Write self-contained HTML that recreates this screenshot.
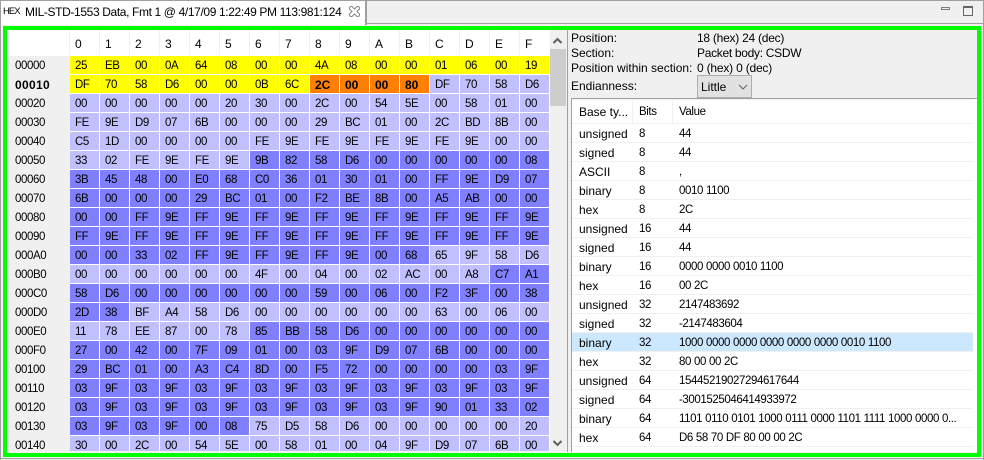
<!DOCTYPE html>
<html><head><meta charset="utf-8">
<style>
html,body{margin:0;padding:0;width:984px;height:460px;overflow:hidden;background:#f0f0f0}
body{position:relative;font-family:"Liberation Sans",sans-serif;font-size:12px;color:#000}
.a{position:absolute}
.r{position:absolute;left:8px;height:18px;line-height:20px;width:542px;display:flex;white-space:nowrap;font-size:11.5px;letter-spacing:-.4px}
.r b.ad{font-weight:700;font-size:12px;letter-spacing:.33px}
.ad{display:block;width:55px;padding-left:7px;margin-right:0;font-weight:400;flex:none}
.r i{display:block;font-style:normal;width:24px;padding-left:5px;margin-right:1px;flex:none;height:18px}
.y{background:#ff0}.r i.o{background:#ff8000;font-weight:700;font-size:12px;letter-spacing:0}.l{background:#c0c0ff}.d{background:#8080ff}
.h{position:absolute;top:30px;height:25px;line-height:28px;width:29px;padding-left:5px;box-sizing:border-box;background:#fff;border-right:0}
.s{position:absolute;top:30px;width:1px;height:25px;background:#f0f0f0}
.t{position:absolute;left:572px;width:401px;height:18px;line-height:20px;display:flex;background:#fff;white-space:nowrap}
.t span{display:block;flex:none;box-sizing:border-box}
.t span:nth-child(1){width:60px;padding-left:7px;margin-right:1px}
.t span:nth-child(2){width:39px;padding-left:6px;margin-right:1px;font-size:11.5px;letter-spacing:-.4px}
.t span:nth-child(3){width:300px;padding-left:6px;font-size:11.5px;letter-spacing:-.4px;word-spacing:.2px}
</style></head><body>
<div class="a" style="left:0;top:0;width:984px;height:1px;background:#a0a0a0"></div>
<div class="a" style="left:0;top:1px;width:367px;height:24px;background:#fff;border-right:2px solid #a0a0a0;box-sizing:border-box"></div>
<div class="a" style="left:367px;top:23px;width:617px;height:1px;background:#a0a0a0"></div>
<div class="a" style="left:0;top:0;width:1px;height:460px;background:#a0a0a0"></div>
<div class="a" style="left:983px;top:0;width:1px;height:460px;background:#a0a0a0"></div>
<div class="a" style="left:0;top:458px;width:984px;height:1px;background:#a0a0a0"></div>
<div class="a" style="left:3px;top:6px;font-size:9.5px;letter-spacing:-1px;line-height:11px">HEX</div>
<div class="a" style="left:25px;top:4px;line-height:17px;font-size:12px;letter-spacing:-.37px;white-space:nowrap">MIL-STD-1553 Data, Fmt 1 @ 4/17/09 1:22:49 PM 113:981:124</div>
<svg class="a" style="left:349px;top:6px" width="11" height="11" viewBox="0 0 11 11"><path d="M1.5 .5L3 .5L5.5 3L8 .5L9.5 .5L10.5 1.5L10.5 3L8 5.5L10.5 8L10.5 9.5L9.5 10.5L8 10.5L5.5 8L3 10.5L1.5 10.5L.5 9.5L.5 8L3 5.5L.5 3L.5 1.5Z" fill="none" stroke="#888" stroke-width="1"/></svg>
<div class="a" style="left:941px;top:7px;width:9px;height:3px;border:1px solid #7a7a7a;box-sizing:border-box"></div>
<div class="a" style="left:963px;top:6px;width:10px;height:10px;border:1px solid #666;border-top-width:2px;box-sizing:border-box"></div>

<div class="a" style="left:3px;top:26px;width:978px;height:431px;border:4px solid #00ff00;box-sizing:border-box;background:#f0f0f0"></div>
<div class="a" style="left:7px;top:30px;width:543px;height:421px;background:#fff"></div>
<div class="a" style="left:8px;top:56px;width:62px;height:395px;background:#f0f0f0"></div>

<div class="h" style="left:70px">0</div><div class="h" style="left:100px">1</div><div class="h" style="left:130px">2</div><div class="h" style="left:160px">3</div><div class="h" style="left:190px">4</div><div class="h" style="left:220px">5</div><div class="h" style="left:250px">6</div><div class="h" style="left:280px">7</div><div class="h" style="left:310px">8</div><div class="h" style="left:340px">9</div><div class="h" style="left:370px">A</div><div class="h" style="left:400px">B</div><div class="h" style="left:430px">C</div><div class="h" style="left:460px">D</div><div class="h" style="left:490px">E</div><div class="h" style="left:520px">F</div>
<div class="s" style="left:69px"></div><div class="s" style="left:99px"></div><div class="s" style="left:129px"></div><div class="s" style="left:159px"></div><div class="s" style="left:189px"></div><div class="s" style="left:219px"></div><div class="s" style="left:249px"></div><div class="s" style="left:279px"></div><div class="s" style="left:309px"></div><div class="s" style="left:339px"></div><div class="s" style="left:369px"></div><div class="s" style="left:399px"></div><div class="s" style="left:429px"></div><div class="s" style="left:459px"></div><div class="s" style="left:489px"></div><div class="s" style="left:519px"></div>

<div class="r" style="top:56px"><span class="ad">00000</span><i class="y">25</i><i class="y">EB</i><i class="y">00</i><i class="y">0A</i><i class="y">64</i><i class="y">08</i><i class="y">00</i><i class="y">00</i><i class="y">4A</i><i class="y">08</i><i class="y">00</i><i class="y">00</i><i class="y">01</i><i class="y">06</i><i class="y">00</i><i class="y">19</i></div>
<div class="r" style="top:75px"><b class="ad">00010</b><i class="y">DF</i><i class="y">70</i><i class="y">58</i><i class="y">D6</i><i class="y">00</i><i class="y">00</i><i class="y">0B</i><i class="y">6C</i><i class="o">2C</i><i class="o">00</i><i class="o">00</i><i class="o">80</i><i class="l">DF</i><i class="l">70</i><i class="l">58</i><i class="l">D6</i></div>
<div class="r" style="top:94px"><span class="ad">00020</span><i class="l">00</i><i class="l">00</i><i class="l">00</i><i class="l">00</i><i class="l">00</i><i class="l">20</i><i class="l">30</i><i class="l">00</i><i class="l">2C</i><i class="l">00</i><i class="l">54</i><i class="l">5E</i><i class="l">00</i><i class="l">58</i><i class="l">01</i><i class="l">00</i></div>
<div class="r" style="top:113px"><span class="ad">00030</span><i class="l">FE</i><i class="l">9E</i><i class="l">D9</i><i class="l">07</i><i class="l">6B</i><i class="l">00</i><i class="l">00</i><i class="l">00</i><i class="l">29</i><i class="l">BC</i><i class="l">01</i><i class="l">00</i><i class="l">2C</i><i class="l">BD</i><i class="l">8B</i><i class="l">00</i></div>
<div class="r" style="top:132px"><span class="ad">00040</span><i class="l">C5</i><i class="l">1D</i><i class="l">00</i><i class="l">00</i><i class="l">00</i><i class="l">00</i><i class="l">FE</i><i class="l">9E</i><i class="l">FE</i><i class="l">9E</i><i class="l">FE</i><i class="l">9E</i><i class="l">FE</i><i class="l">9E</i><i class="l">00</i><i class="l">00</i></div>
<div class="r" style="top:151px"><span class="ad">00050</span><i class="l">33</i><i class="l">02</i><i class="l">FE</i><i class="l">9E</i><i class="l">FE</i><i class="l">9E</i><i class="d">9B</i><i class="d">82</i><i class="d">58</i><i class="d">D6</i><i class="d">00</i><i class="d">00</i><i class="d">00</i><i class="d">00</i><i class="d">00</i><i class="d">08</i></div>
<div class="r" style="top:170px"><span class="ad">00060</span><i class="d">3B</i><i class="d">45</i><i class="d">48</i><i class="d">00</i><i class="d">E0</i><i class="d">68</i><i class="d">C0</i><i class="d">36</i><i class="d">01</i><i class="d">30</i><i class="d">01</i><i class="d">00</i><i class="d">FF</i><i class="d">9E</i><i class="d">D9</i><i class="d">07</i></div>
<div class="r" style="top:189px"><span class="ad">00070</span><i class="d">6B</i><i class="d">00</i><i class="d">00</i><i class="d">00</i><i class="d">29</i><i class="d">BC</i><i class="d">01</i><i class="d">00</i><i class="d">F2</i><i class="d">BE</i><i class="d">8B</i><i class="d">00</i><i class="d">A5</i><i class="d">AB</i><i class="d">00</i><i class="d">00</i></div>
<div class="r" style="top:208px"><span class="ad">00080</span><i class="d">00</i><i class="d">00</i><i class="d">FF</i><i class="d">9E</i><i class="d">FF</i><i class="d">9E</i><i class="d">FF</i><i class="d">9E</i><i class="d">FF</i><i class="d">9E</i><i class="d">FF</i><i class="d">9E</i><i class="d">FF</i><i class="d">9E</i><i class="d">FF</i><i class="d">9E</i></div>
<div class="r" style="top:227px"><span class="ad">00090</span><i class="d">FF</i><i class="d">9E</i><i class="d">FF</i><i class="d">9E</i><i class="d">FF</i><i class="d">9E</i><i class="d">FF</i><i class="d">9E</i><i class="d">FF</i><i class="d">9E</i><i class="d">FF</i><i class="d">9E</i><i class="d">FF</i><i class="d">9E</i><i class="d">FF</i><i class="d">9E</i></div>
<div class="r" style="top:246px"><span class="ad">000A0</span><i class="d">00</i><i class="d">00</i><i class="d">33</i><i class="d">02</i><i class="d">FF</i><i class="d">9E</i><i class="d">FF</i><i class="d">9E</i><i class="d">FF</i><i class="d">9E</i><i class="d">00</i><i class="d">68</i><i class="l">65</i><i class="l">9F</i><i class="l">58</i><i class="l">D6</i></div>
<div class="r" style="top:265px"><span class="ad">000B0</span><i class="l">00</i><i class="l">00</i><i class="l">00</i><i class="l">00</i><i class="l">00</i><i class="l">00</i><i class="l">4F</i><i class="l">00</i><i class="l">04</i><i class="l">00</i><i class="l">02</i><i class="l">AC</i><i class="l">00</i><i class="l">A8</i><i class="d">C7</i><i class="d">A1</i></div>
<div class="r" style="top:284px"><span class="ad">000C0</span><i class="d">58</i><i class="d">D6</i><i class="d">00</i><i class="d">00</i><i class="d">00</i><i class="d">00</i><i class="d">00</i><i class="d">00</i><i class="d">59</i><i class="d">00</i><i class="d">06</i><i class="d">00</i><i class="d">F2</i><i class="d">3F</i><i class="d">00</i><i class="d">38</i></div>
<div class="r" style="top:303px"><span class="ad">000D0</span><i class="d">2D</i><i class="d">38</i><i class="l">BF</i><i class="l">A4</i><i class="l">58</i><i class="l">D6</i><i class="l">00</i><i class="l">00</i><i class="l">00</i><i class="l">00</i><i class="l">00</i><i class="l">00</i><i class="l">63</i><i class="l">00</i><i class="l">06</i><i class="l">00</i></div>
<div class="r" style="top:322px"><span class="ad">000E0</span><i class="l">11</i><i class="l">78</i><i class="l">EE</i><i class="l">87</i><i class="l">00</i><i class="l">78</i><i class="d">85</i><i class="d">BB</i><i class="d">58</i><i class="d">D6</i><i class="d">00</i><i class="d">00</i><i class="d">00</i><i class="d">00</i><i class="d">00</i><i class="d">00</i></div>
<div class="r" style="top:341px"><span class="ad">000F0</span><i class="d">27</i><i class="d">00</i><i class="d">42</i><i class="d">00</i><i class="d">7F</i><i class="d">09</i><i class="d">01</i><i class="d">00</i><i class="d">03</i><i class="d">9F</i><i class="d">D9</i><i class="d">07</i><i class="d">6B</i><i class="d">00</i><i class="d">00</i><i class="d">00</i></div>
<div class="r" style="top:360px"><span class="ad">00100</span><i class="d">29</i><i class="d">BC</i><i class="d">01</i><i class="d">00</i><i class="d">A3</i><i class="d">C4</i><i class="d">8D</i><i class="d">00</i><i class="d">F5</i><i class="d">72</i><i class="d">00</i><i class="d">00</i><i class="d">00</i><i class="d">00</i><i class="d">03</i><i class="d">9F</i></div>
<div class="r" style="top:379px"><span class="ad">00110</span><i class="d">03</i><i class="d">9F</i><i class="d">03</i><i class="d">9F</i><i class="d">03</i><i class="d">9F</i><i class="d">03</i><i class="d">9F</i><i class="d">03</i><i class="d">9F</i><i class="d">03</i><i class="d">9F</i><i class="d">03</i><i class="d">9F</i><i class="d">03</i><i class="d">9F</i></div>
<div class="r" style="top:398px"><span class="ad">00120</span><i class="d">03</i><i class="d">9F</i><i class="d">03</i><i class="d">9F</i><i class="d">03</i><i class="d">9F</i><i class="d">03</i><i class="d">9F</i><i class="d">03</i><i class="d">9F</i><i class="d">03</i><i class="d">9F</i><i class="d">90</i><i class="d">01</i><i class="d">33</i><i class="d">02</i></div>
<div class="r" style="top:417px"><span class="ad">00130</span><i class="d">03</i><i class="d">9F</i><i class="d">03</i><i class="d">9F</i><i class="d">00</i><i class="d">08</i><i class="l">75</i><i class="l">D5</i><i class="l">58</i><i class="l">D6</i><i class="l">00</i><i class="l">00</i><i class="l">00</i><i class="l">00</i><i class="l">00</i><i class="l">20</i></div>
<div class="r" style="top:436px;height:15px;overflow:hidden"><span class="ad">00140</span><i class="l">30</i><i class="l">00</i><i class="l">2C</i><i class="l">00</i><i class="l">54</i><i class="l">5E</i><i class="l">00</i><i class="l">58</i><i class="l">01</i><i class="l">00</i><i class="l">04</i><i class="l">9F</i><i class="l">D9</i><i class="l">07</i><i class="l">6B</i><i class="l">00</i></div>

<div class="a" style="left:550px;top:30px;width:17px;height:421px;background:#f0f0f0"></div>
<div class="a" style="left:550px;top:49px;width:16px;height:57px;background:#cdcdcd"></div>
<svg class="a" style="left:552px;top:37px" width="11" height="8" viewBox="0 0 11 8"><path d="M1.5 6L5.5 2L9.5 6" fill="none" stroke="#606060" stroke-width="2"/></svg>
<svg class="a" style="left:552px;top:439px" width="11" height="8" viewBox="0 0 11 8"><path d="M1.5 2L5.5 6L9.5 2" fill="none" stroke="#606060" stroke-width="2"/></svg>
<div class="a" style="left:567px;top:30px;width:1px;height:422px;background:#a0a0a0"></div>

<div class="a" style="left:571px;top:31px;line-height:15px;white-space:nowrap">Position:</div>
<div class="a" style="left:571px;top:46px;line-height:15px;white-space:nowrap">Section:</div>
<div class="a" style="left:571px;top:61px;line-height:15px;white-space:nowrap">Position within section:</div>
<div class="a" style="left:571px;top:79px;line-height:15px;white-space:nowrap">Endianness:</div>
<div class="a" style="left:697px;top:31px;line-height:15px;white-space:nowrap;letter-spacing:-.25px">18 (hex) 24 (dec)</div>
<div class="a" style="left:697px;top:46px;line-height:15px;white-space:nowrap;letter-spacing:-.3px">Packet body: CSDW</div>
<div class="a" style="left:697px;top:61px;line-height:15px;white-space:nowrap;letter-spacing:-.2px">0 (hex) 0 (dec)</div>
<div class="a" style="left:697px;top:75px;width:55px;height:23px;background:#e1e1e1;border:1px solid #adadad;box-sizing:border-box;line-height:23px;padding-left:3px">Little</div>
<svg class="a" style="left:738px;top:84px" width="10" height="6" viewBox="0 0 10 6"><path d="M1 1L5 5L9 1" fill="none" stroke="#606060" stroke-width="1"/></svg>

<div class="a" style="left:571px;top:98px;width:406px;height:354px;background:#fff;border-top:1px solid #a0a0a0;border-left:1px solid #a0a0a0;box-sizing:border-box"></div>
<div class="a" style="left:572px;top:99px;width:401px;height:352px;background:#f0f0f0"></div>
<div class="a" style="left:572px;top:100px;width:401px;height:23px;background:#fff"></div>
<div class="t" style="top:103px;height:19px;line-height:18px"><span>Base ty...</span><span>Bits</span><span>Value</span></div>
<div class="a" style="left:632px;top:100px;width:1px;height:23px;background:#f0f0f0"></div>
<div class="a" style="left:672px;top:100px;width:1px;height:23px;background:#f0f0f0"></div>

<div class="t" style="top:124px"><span>unsigned</span><span>8</span><span>44</span></div>
<div class="t" style="top:143px"><span>signed</span><span>8</span><span>44</span></div>
<div class="t" style="top:162px"><span>ASCII</span><span>8</span><span>,</span></div>
<div class="t" style="top:181px"><span>binary</span><span>8</span><span>0010 1100</span></div>
<div class="t" style="top:200px"><span>hex</span><span>8</span><span>2C</span></div>
<div class="t" style="top:219px"><span>unsigned</span><span>16</span><span>44</span></div>
<div class="t" style="top:238px"><span>signed</span><span>16</span><span>44</span></div>
<div class="t" style="top:257px"><span>binary</span><span>16</span><span>0000 0000 0010 1100</span></div>
<div class="t" style="top:276px"><span>hex</span><span>16</span><span>00 2C</span></div>
<div class="t" style="top:295px"><span>unsigned</span><span>32</span><span>2147483692</span></div>
<div class="t" style="top:314px"><span>signed</span><span>32</span><span>-2147483604</span></div>
<div class="t" style="top:333px;background:#cce8ff"><span>binary</span><span>32</span><span>1000 0000 0000 0000 0000 0000 0010 1100</span></div>
<div class="t" style="top:352px"><span>hex</span><span>32</span><span>80 00 00 2C</span></div>
<div class="t" style="top:371px"><span>unsigned</span><span>64</span><span>15445219027294617644</span></div>
<div class="t" style="top:390px"><span>signed</span><span>64</span><span>-3001525046414933972</span></div>
<div class="t" style="top:409px"><span>binary</span><span>64</span><span>1101 0110 0101 1000 0111 0000 1101 1111 1000 0000 0...</span></div>
<div class="t" style="top:428px"><span>hex</span><span>64</span><span>D6 58 70 DF 80 00 00 2C</span></div>
<div class="a" style="left:572px;top:447px;width:401px;height:4px;background:#fff"></div>
</body></html>
